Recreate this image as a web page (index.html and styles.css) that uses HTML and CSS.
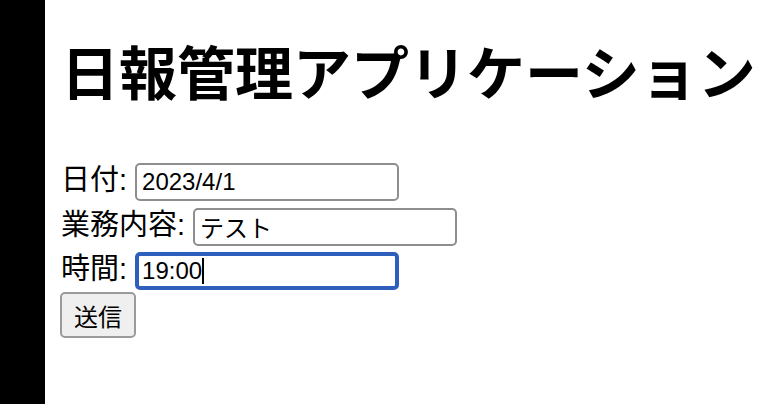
FILE: index.html
```html
<!DOCTYPE html>
<html lang="ja">
<head>
<meta charset="utf-8">
<title>日報管理アプリケーション</title>
<link rel="stylesheet" href="styles.css">
</head>
<body>
<div class="bar"></div>
<main class="main">
  <h1 class="title">日報管理アプリケーション</h1>
  <form class="form">
    <div class="row"><label class="label" for="date">日付:</label><input class="field" id="date" type="text" value="2023/4/1"></div>
    <div class="row"><label class="label" for="task">業務内容:</label><input class="field" id="task" type="text" value="テスト"></div>
    <div class="row last"><label class="label" for="time">時間:</label><span class="field-wrap"><input class="field focused" id="time" type="text" value="19:00"><span class="caret"></span></span></div>
    <button class="submit" type="button">送信</button>
  </form>
</main>
</body>
</html>
```
FILE: styles.css
```css
html, body {
  margin: 0;
  padding: 0;
  background: #fff;
}
body {
  display: flex;
  min-height: 404px;
  font-family: "Liberation Sans", "Noto Sans CJK JP", sans-serif;
  color: #000;
}
.bar {
  width: 45px;
  flex: none;
  background: #000;
}
.main {
  flex: 1;
  padding: 43px 0 0 16px;
}
.title {
  margin: 0;
  font-size: 58px;
  line-height: 64px;
  font-weight: bold;
  white-space: nowrap;
}
.form {
  margin-top: 56px;
  display: flex;
  flex-direction: column;
  align-items: flex-start;
}
.row {
  display: flex;
  align-items: flex-start;
  height: 38px;
  margin-bottom: 6.5px;
}
.row.last {
  margin-bottom: 2px;
}
.label {
  font-size: 29px;
  line-height: 34px;
  margin-right: 8px;
  white-space: nowrap;
}
.field-wrap {
  position: relative;
  display: block;
}
.field {
  display: block;
  box-sizing: border-box;
  width: 264px;
  height: 38px;
  margin: 0;
  padding: 0 5px;
  border: 2px solid #8e8e8e;
  border-radius: 5px;
  font-family: "Liberation Sans", "Noto Sans CJK JP", sans-serif;
  font-size: 24px;
  color: #000;
  background: #fff;
  outline: none;
}
.field.focused {
  border: 4px solid #2f5fbd;
  padding: 0 3px;
}
.caret {
  position: absolute;
  left: 67px;
  top: 6px;
  width: 1.5px;
  height: 26px;
  background: #000;
}
.submit {
  box-sizing: border-box;
  height: 46px;
  margin: 0 0 0 -1px;
  padding: 0 12px;
  border: 2px solid #9a9a9a;
  border-radius: 5px;
  background: #efefef;
  font-family: "Liberation Sans", "Noto Sans CJK JP", sans-serif;
  font-size: 24px;
  color: #000;
}
```
